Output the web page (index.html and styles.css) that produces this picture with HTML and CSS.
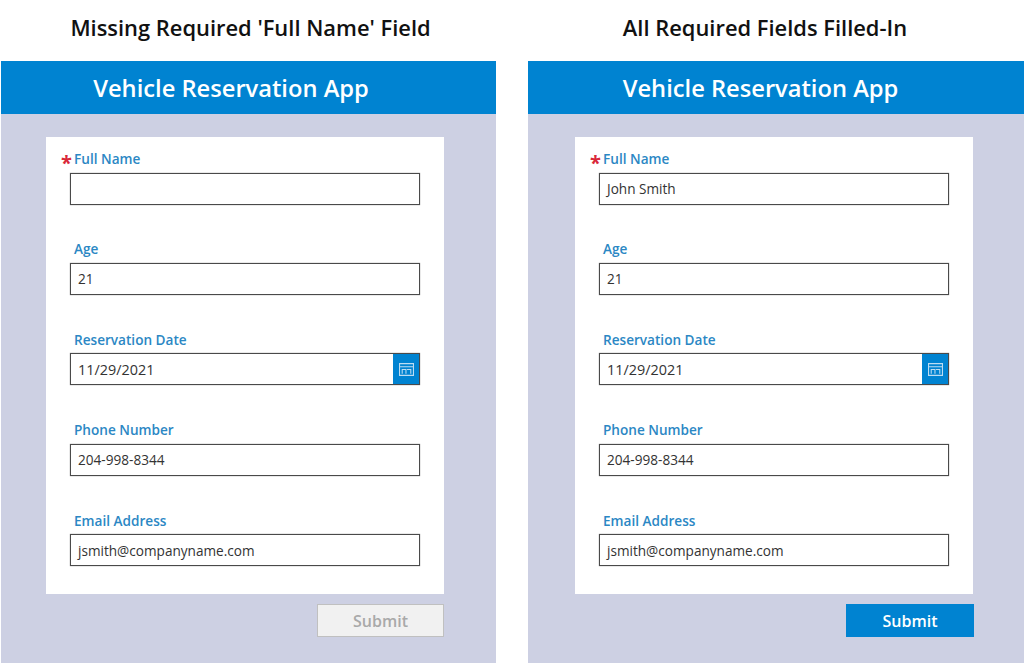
FILE: index.html
```html
<!DOCTYPE html>
<html lang="en">
<head>
    <meta charset="UTF-8">
    <title>Vehicle Reservation App</title>
    <link rel="stylesheet" href="styles.css">
</head>
<body>
    <div class="page">
        <section class="column column-left">
            <h2 class="caption">Missing Required 'Full Name' Field</h2>
            <div class="app">
                <div class="app-header">Vehicle Reservation App</div>
                <form class="card">
                    <div class="field">
                        <label class="required">Full Name</label>
                        <div class="value"></div>
                    </div>
                    <div class="field">
                        <label>Age</label>
                        <div class="value">21</div>
                    </div>
                    <div class="field">
                        <label>Reservation Date</label>
                        <div class="value date">
                            <span class="date-text">11/29/2021</span>
                            <span class="date-btn">
                                <svg viewBox="0 0 14 14" width="15" height="15"><path d="M.5 1.500h13v11H.5zM.5 4.500h13M3 11V7h3.500v4M7.500 7H11v4" fill="none" stroke="#bcdcf2"/></svg>
                            </span>
                        </div>
                    </div>
                    <div class="field">
                        <label>Phone Number</label>
                        <div class="value">204-998-8344</div>
                    </div>
                    <div class="field">
                        <label>Email Address</label>
                        <div class="value">jsmith@companyname.com</div>
                    </div>
                </form>
                <div class="actions">
                    <button class="submit" type="button" disabled>Submit</button>
                </div>
            </div>
        </section>
        <section class="column column-right">
            <h2 class="caption">All Required Fields Filled-In</h2>
            <div class="app">
                <div class="app-header">Vehicle Reservation App</div>
                <form class="card">
                    <div class="field">
                        <label class="required">Full Name</label>
                        <div class="value">John Smith</div>
                    </div>
                    <div class="field">
                        <label>Age</label>
                        <div class="value">21</div>
                    </div>
                    <div class="field">
                        <label>Reservation Date</label>
                        <div class="value date">
                            <span class="date-text">11/29/2021</span>
                            <span class="date-btn">
                                <svg viewBox="0 0 14 14" width="15" height="15"><path d="M.5 1.500h13v11H.5zM.5 4.500h13M3 11V7h3.500v4M7.500 7H11v4" fill="none" stroke="#bcdcf2"/></svg>
                            </span>
                        </div>
                    </div>
                    <div class="field">
                        <label>Phone Number</label>
                        <div class="value">204-998-8344</div>
                    </div>
                    <div class="field">
                        <label>Email Address</label>
                        <div class="value">jsmith@companyname.com</div>
                    </div>
                </form>
                <div class="actions">
                    <button class="submit" type="button">Submit</button>
                </div>
            </div>
        </section>
    </div>
</body>
</html>
```

FILE: styles.css
```css
* {
    padding: 0;
    margin: 0;
    box-sizing: border-box;
}

:root {
    --blue: #0083d1;
    --panel: #cdd0e3;
    --label: #2b87c4;
    --border: #4a4a4a;
}

html, body {
    height: 100%;
    overflow: hidden;
}

body {
    font-family: "Open Sans", "Noto Sans", sans-serif;
    background-color: white;
}

.page {
    display: flex;
    height: 663px;
}

.column {
    display: flex;
    flex-direction: column;
}

.column-left {
    width: 496px;
    padding-left: 1px;
    margin-right: 32px;
}

.column-right {
    width: 496px;
}

.caption {
    height: 61px;
    padding-top: 12px;
    line-height: 32px;
    font-size: 21.9px;
    font-weight: 600;
    color: #111;
    text-align: center;
}

.column-left .caption {
    padding-left: 5px;
    padding-right: 1px;
}

.column-right .caption {
    padding-right: 22px;
}

.app {
    flex: 1;
    background-color: var(--panel);
}

.app-header {
    height: 53px;
    line-height: 54px;
    background-color: var(--blue);
    color: white;
    font-size: 23.7px;
    font-weight: 600;
    text-align: center;
    padding-right: 35px;
}

.column-right .app-header {
    padding-right: 31px;
}

.card {
    width: 398px;
    height: 457px;
    margin: 23px 0 0 45px;
    padding: 12px 24px 0;
    background-color: white;
}

.column-right .card {
    margin-left: 47px;
}

.field {
    height: 90.4px;
}

.field label {
    position: relative;
    display: block;
    height: 20px;
    line-height: 20px;
    padding-left: 4px;
    margin-bottom: 3.6px;
    font-size: 13.6px;
    font-weight: 600;
    color: var(--label);
}

.required::before {
    content: "*";
    position: absolute;
    left: -9px;
    top: 4px;
    color: #d9273a;
    font-size: 20px;
    font-weight: 700;
}

.value {
    display: flex;
    align-items: center;
    height: 32px;
    width: 350px;
    padding-left: 7px;
    border: 1px solid var(--border);
    box-shadow: 0 0 1px rgba(0, 0, 0, 0.5);
    font-size: 13.6px;
    color: #333;
}

.date {
    justify-content: space-between;
}

.date-text {
    font-size: 14.4px;
}

.date-btn {
    display: flex;
    align-items: center;
    justify-content: center;
    width: 26px;
    height: 30px;
    background-color: var(--blue);
}

.actions {
    display: flex;
    justify-content: flex-end;
    width: 398px;
    margin: 10px 0 0 45px;
}

.column-right .actions {
    margin-left: 48px;
}

.submit {
    width: 128px;
    height: 33px;
    border: none;
    background-color: var(--blue);
    color: white;
    font-family: inherit;
    font-size: 16px;
    font-weight: 600;
}

.submit:disabled {
    width: 127px;
    background-color: #f1f1f1;
    border: 1px solid #c0c0c0;
    color: #a9a9a9;
}
```
